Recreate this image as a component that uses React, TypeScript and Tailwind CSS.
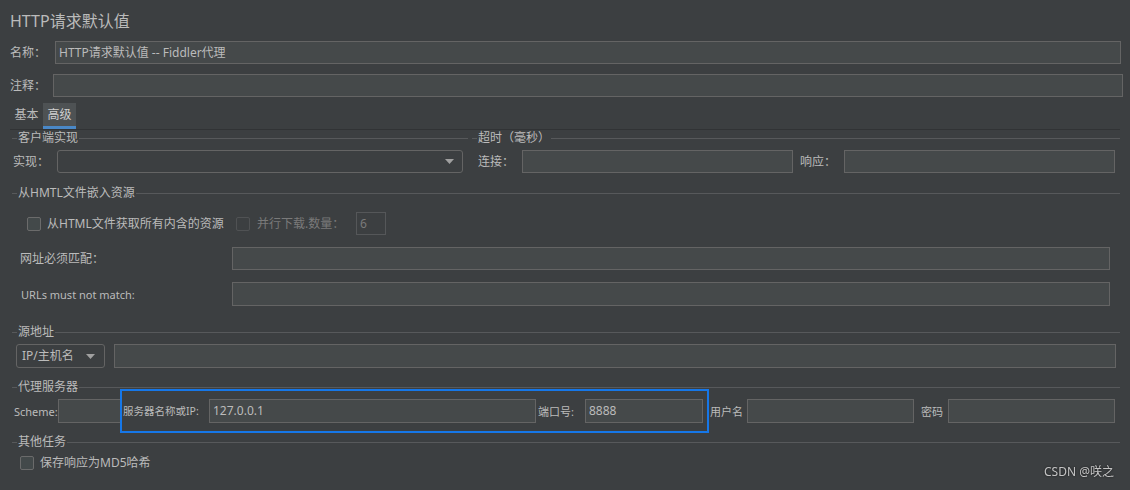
import React from 'react';

const Field: React.FC<{ className?: string; value?: string; disabled?: boolean }> = ({ className = '', value, disabled }) => (
  <div
    className={`h-full border flex items-center shrink-0 ${
      disabled ? 'border-[#555759] bg-transparent text-[#7a7a7a]' : 'border-[#646464] bg-[#45494a] text-[#bbbbbb]'
    } ${className}`}
  >
    {value && <span className="pl-[3px] text-[12px] leading-none whitespace-nowrap">{value}</span>}
  </div>
);

const Arrow: React.FC = () => (
  <svg width="9" height="5" viewBox="0 0 9 5" className="shrink-0">
    <path d="M0 0 H9 L4.5 5 Z" fill="#a0a0a0" />
  </svg>
);

const Check: React.FC<{ disabled?: boolean }> = ({ disabled }) => (
  <div
    className={`w-[14px] h-[14px] rounded-[2px] border shrink-0 ${
      disabled ? 'border-[#505254] bg-transparent' : 'border-[#6b6b6b] bg-[#43494a]'
    }`}
  />
);

const Section: React.FC<{ title: string; className?: string }> = ({ title, className = '' }) => (
  <div className={`flex items-center h-[16px] ${className}`}>
    <div className="w-[5px] h-px bg-[#57595b]" />
    <span className="px-[1px] text-[12px] leading-none text-[#bbbbbb] whitespace-nowrap">{title}</span>
    <div className="flex-1 h-px bg-[#57595b]" />
  </div>
);

const App: React.FC = () => {
  return (
    <div className="relative w-[1130px] h-[490px] overflow-hidden bg-[#3c3f41] text-[#bbbbbb] text-[12px] font-['Noto_Sans','Noto_Sans_CJK_SC',sans-serif]">
      {/* title */}
      <div className="h-[41px] pl-[10px] pt-[10px] text-[16px] leading-[22px]">HTTP请求默认值</div>

      <div className="flex items-center h-[23px] pr-[9px]">
        <span className="w-[55px] pl-[10px] leading-none">名称：</span>
        <Field className="flex-1 shrink" value="HTTP请求默认值 -- Fiddler代理" />
      </div>

      <div className="flex items-center h-[23px] mt-[10px] pr-[7px]">
        <span className="w-[53px] pl-[10px] leading-none">注释：</span>
        <Field className="flex-1 shrink" />
      </div>

      {/* tabs */}
      <div className="flex mt-[6px] mx-[10px] h-[27px] border-b border-[#313335]">
        <div className="w-[33px] flex items-center justify-center leading-none pb-[2px]">基本</div>
        <div className="w-[33px] flex items-center justify-center leading-none bg-[#4e5254] border-b-[3px] border-[#4a88c7] text-[#d0d0d0]">
          高级
        </div>
      </div>

      {/* client + timeout */}
      <div className="flex pl-[12px] pr-[10px]">
        <div className="w-[456px] pr-[5px]">
          <Section title="客户端实现" className="-mr-[5px]" />
          <div className="flex items-center h-[23px] mt-[4px]">
            <span className="w-[45px] pl-[1px] leading-none">实现：</span>
            <div className="flex-1 h-full border border-[#646464] rounded-[3px] bg-[#3c3f41] flex items-center justify-end pr-[8px]">
              <Arrow />
            </div>
          </div>
        </div>
        <div className="flex-1 pl-[4px]">
          <Section title="超时（毫秒）" />
          <div className="flex items-center h-[23px] mt-[4px] pl-[6px]">
            <span className="w-[44px] leading-none">连接：</span>
            <Field className="w-[271px]" />
            <span className="w-[44px] ml-[7px] leading-none">响应：</span>
            <Field className="w-[271px]" />
          </div>
        </div>
      </div>

      {/* embedded resources */}
      <div className="pl-[12px] pr-[10px] mt-[12px]">
        <Section title="从HMTL文件嵌入资源" />
        <div className="flex items-center h-[23px] mt-[11px] pl-[15px]">
          <Check />
          <span className="ml-[6px] w-[189px] leading-none whitespace-nowrap">从HTML文件获取所有内含的资源</span>
          <Check disabled />
          <span className="ml-[7px] w-[99px] leading-none text-[#7a7a7a] whitespace-nowrap">并行下载.数量：</span>
          <Field className="w-[30px]" value="6" disabled />
        </div>
        <div className="flex items-center h-[23px] mt-[12px] pr-[10px]">
          <span className="w-[220px] pl-[8px] leading-none">网址必须匹配：</span>
          <Field className="flex-1 shrink" />
        </div>
        <div className="flex items-center h-[24px] mt-[12px] pr-[10px]">
          <span className="w-[220px] pl-[9px] text-[11px] leading-none">URLs must not match:</span>
          <Field className="flex-1 shrink" />
        </div>
      </div>

      {/* source address */}
      <div className="pl-[12px] pr-[10px] mt-[18px]">
        <Section title="源地址" />
        <div className="flex items-center h-[24px] mt-[4px] pl-[4px] pr-[4px]">
          <div className="w-[89px] h-full border border-[#646464] rounded-[3px] flex items-center justify-between pl-[5px] pr-[9px]">
            <span className="leading-none">IP/主机名</span>
            <Arrow />
          </div>
          <Field className="flex-1 shrink ml-[9px]" />
        </div>
      </div>

      {/* proxy */}
      <div className="pl-[12px] pr-[10px] mt-[11px]">
        <Section title="代理服务器" />
        <div className="flex items-center h-[24px] mt-[4px] pl-[2px] text-[11px] leading-none whitespace-nowrap">
          <span className="w-[44px] shrink-0">Scheme:</span>
          <Field className="w-[64px]" />
          <span className="w-[86px] ml-[1px] shrink-0 text-[10.5px]">服务器名称或IP:</span>
          <Field className="w-[327px]" value="127.0.0.1" />
          <span className="w-[47px] ml-[2px] shrink-0">端口号:</span>
          <Field className="w-[118px]" value="8888" />
          <span className="w-[37px] ml-[7px] shrink-0">用户名</span>
          <Field className="w-[167px]" />
          <span className="w-[27px] ml-[7px] shrink-0">密码</span>
          <Field className="w-[167px]" />
        </div>
      </div>

      {/* other tasks */}
      <div className="pl-[12px] pr-[10px] mt-[11px]">
        <Section title="其他任务" />
        <div className="flex items-center h-[14px] mt-[6px] pl-[8px]">
          <Check />
          <span className="ml-[6px] leading-none">保存响应为MD5哈希</span>
        </div>
      </div>

      {/* annotation box */}
      <div className="absolute left-[120px] top-[389px] w-[589px] h-[44px] border-2 border-[#1677e8] pointer-events-none" />

      {/* watermark */}
      <div className="absolute right-[16px] top-[466px] leading-none text-[#c4c4c4] drop-shadow-[0_0_1px_rgba(0,0,0,0.6)]">
        CSDN @咲之
      </div>
    </div>
  );
};

export default App;
